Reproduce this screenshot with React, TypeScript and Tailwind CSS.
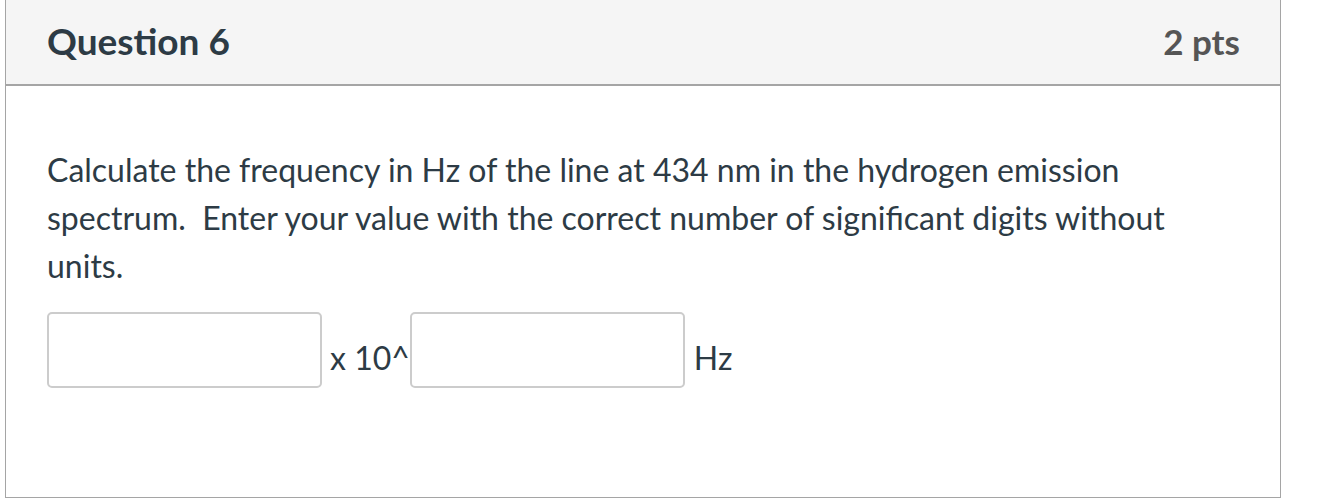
import React from 'react';

const App: React.FC = () => {
  return (
    <div className="w-[1334px] h-[498px] bg-white pl-[5px] pr-[53px]" style={{ fontFamily: 'Lato, "Noto Sans", sans-serif' }}>
      <div className="h-[498px] border-x border-b border-[#a5a5a5] flex flex-col">
        <div className="h-[86px] bg-[#f5f5f5] border-b-2 border-[#a5a5a5] flex items-center justify-between pl-[41px] pr-[40px] pb-[2px]">
          <h2 className="text-[37px] font-bold text-[#2d3b45]">Question 6</h2>
          <span className="text-[35px] font-bold text-[#555555]">2 pts</span>
        </div>
        <div className="pl-[41px] pr-[92px] pt-[60px] text-[#2d3b45]">
          <p className="text-[32px] leading-[48px]">
            Calculate the frequency in Hz of the line at 434 nm in the hydrogen emission spectrum.&nbsp; Enter your value with the correct number of significant digits without units.
          </p>
          <div className="flex items-end mt-[22px] text-[32px] leading-[48px]">
            <input className="w-[275px] h-[76px] border-2 border-[#cccccc] rounded-[5px] bg-white outline-none" />
            <span className="ml-[8px] mb-[6px]">x 10^</span>
            <input className="w-[275px] h-[76px] border-2 border-[#cccccc] rounded-[5px] bg-white outline-none" />
            <span className="ml-[9px] mb-[6px]">Hz</span>
          </div>
        </div>
      </div>
    </div>
  );
};

export default App;
